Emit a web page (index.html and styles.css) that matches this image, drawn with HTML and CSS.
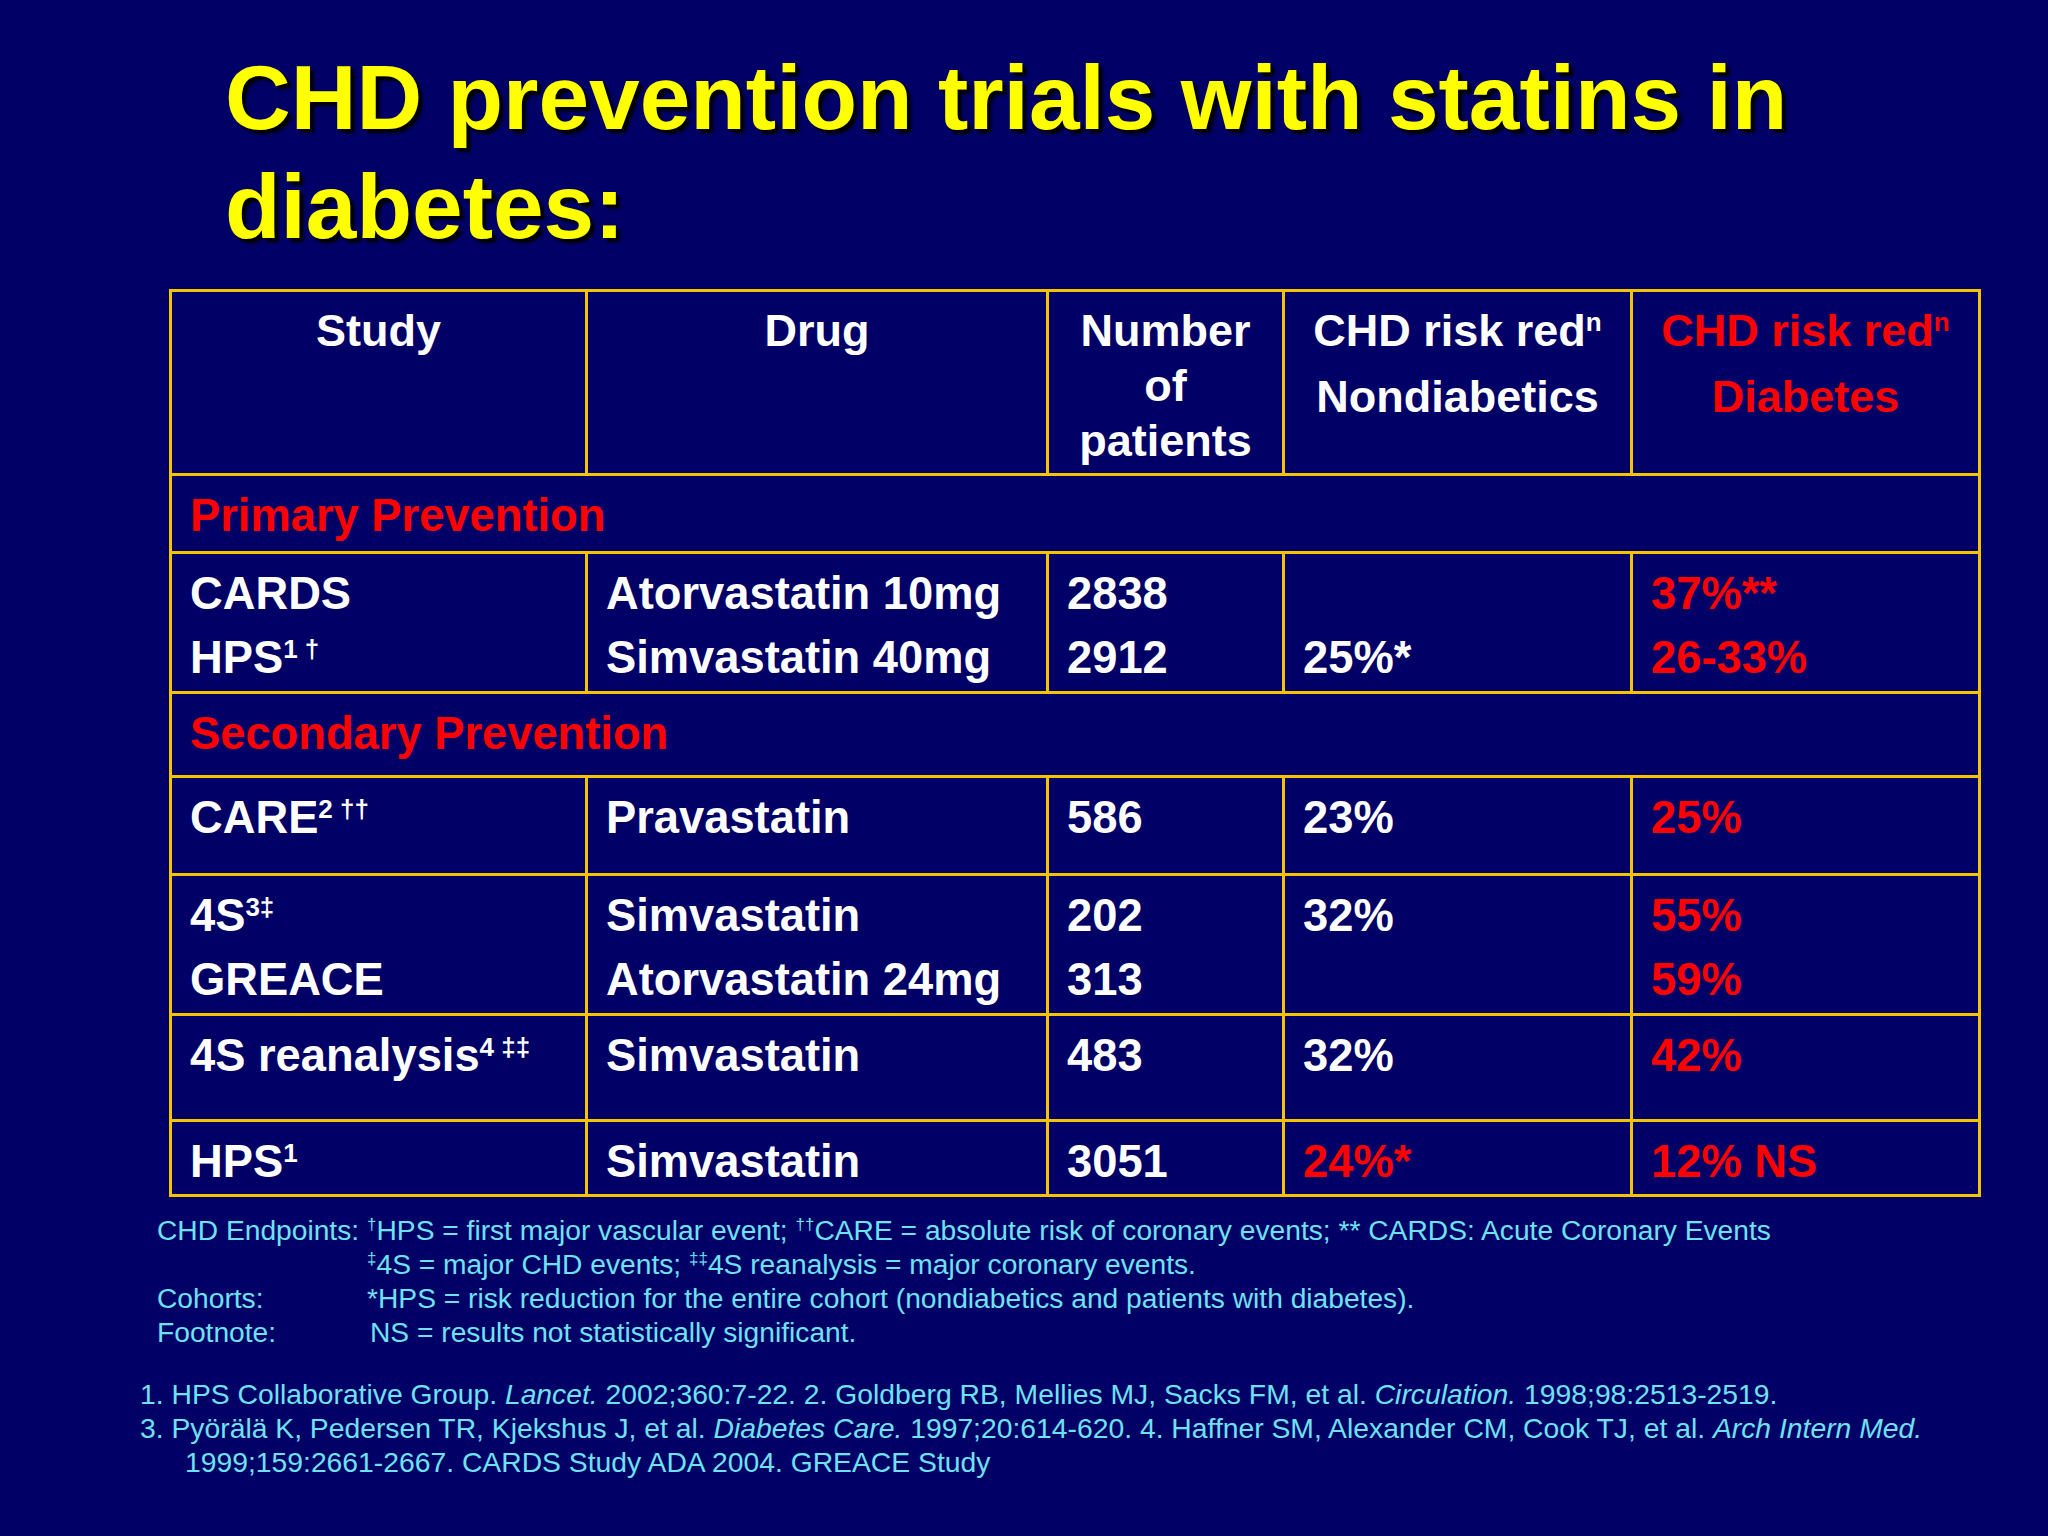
FILE: index.html
```html
<!DOCTYPE html>
<html lang="en">
<head>
<meta charset="utf-8">
<title>CHD prevention trials with statins in diabetes</title>
<link rel="stylesheet" href="styles.css">
</head>
<body>
<div class="slide">
  <h1 class="title">CHD prevention trials with statins in<br>diabetes:</h1>

  <div class="grid">
    <div class="cell head">Study</div>
    <div class="cell head">Drug</div>
    <div class="cell head">Number<br>of<br>patients</div>
    <div class="cell head"><div>CHD risk red<span class="sup">n</span></div><div class="second">Nondiabetics</div></div>
    <div class="cell head red"><div>CHD risk red<span class="sup">n</span></div><div class="second">Diabetes</div></div>

    <div class="cell section red">Primary Prevention</div>

    <div class="cell"><div>CARDS</div><div>HPS<span class="sup">1 †</span></div></div>
    <div class="cell"><div>Atorvastatin 10mg</div><div>Simvastatin 40mg</div></div>
    <div class="cell"><div>2838</div><div>2912</div></div>
    <div class="cell"><div>&nbsp;</div><div>25%*</div></div>
    <div class="cell red"><div>37%**</div><div>26-33%</div></div>

    <div class="cell section red">Secondary Prevention</div>

    <div class="cell">CARE<span class="sup">2 ††</span></div>
    <div class="cell">Pravastatin</div>
    <div class="cell">586</div>
    <div class="cell">23%</div>
    <div class="cell red">25%</div>

    <div class="cell"><div>4S<span class="sup">3‡</span></div><div>GREACE</div></div>
    <div class="cell"><div>Simvastatin</div><div>Atorvastatin 24mg</div></div>
    <div class="cell"><div>202</div><div>313</div></div>
    <div class="cell">32%</div>
    <div class="cell red"><div>55%</div><div>59%</div></div>

    <div class="cell">4S reanalysis<span class="sup">4 ‡‡</span></div>
    <div class="cell">Simvastatin</div>
    <div class="cell">483</div>
    <div class="cell">32%</div>
    <div class="cell red">42%</div>

    <div class="cell">HPS<span class="sup">1</span></div>
    <div class="cell">Simvastatin</div>
    <div class="cell">3051</div>
    <div class="cell red">24%*</div>
    <div class="cell red">12% NS</div>
  </div>

  <div class="notes">
    <div class="label">CHD Endpoints:</div>
    <div class="text"><span class="fsup">†</span>HPS = first major vascular event; <span class="fsup">††</span>CARE = absolute risk of coronary events; ** CARDS: Acute Coronary Events</div>
    <div class="label"></div>
    <div class="text"><span class="fsup">‡</span>4S = major CHD events; <span class="fsup">‡‡</span>4S reanalysis = major coronary events.</div>
    <div class="label">Cohorts:</div>
    <div class="text">*HPS = risk reduction for the entire cohort (nondiabetics and patients with diabetes).</div>
    <div class="label">Footnote:</div>
    <div class="text ns">NS = results not statistically significant.</div>
  </div>

  <div class="refs">
    <div class="ref">1. HPS Collaborative Group. <i>Lancet.</i> 2002;360:7-22. 2. Goldberg RB, Mellies MJ, Sacks FM, et al. <i>Circulation.</i> 1998;98:2513-2519.</div>
    <div class="ref">3. Pyörälä K, Pedersen TR, Kjekshus J, et al. <i>Diabetes Care.</i> 1997;20:614-620. 4. Haffner SM, Alexander CM, Cook TJ, et al. <i>Arch Intern Med.</i></div>
    <div class="ref cont">1999;159:2661-2667. CARDS Study ADA 2004. GREACE Study</div>
  </div>
</div>
</body>
</html>
```

FILE: styles.css
```css
html, body {
  margin: 0;
  padding: 0;
  background: #000066;
}

.slide {
  width: 2048px;
  height: 1536px;
  background: #000066;
  font-family: "Liberation Sans", Arial, sans-serif;
  overflow: hidden;
}

.title {
  margin: 0;
  padding: 43px 0 0 225px;
  font-size: 91px;
  line-height: 109px;
  font-weight: bold;
  color: #ffff00;
  text-shadow: 4px 4px 3px #000000;
}

.grid {
  margin: 28px 0 0 169px;
  width: 1812px;
  box-sizing: border-box;
  display: grid;
  grid-template-columns: 413px 458px 233px 345px 345px;
  grid-template-rows: 181px 75px 137px 81px 95px 137px 103px 72px;
  gap: 3px;
  padding: 3px;
  background: #f5c400;
}

.cell {
  background: #000066;
  color: #ffffff;
  font-size: 45.3px;
  font-weight: bold;
  line-height: 64px;
  padding: 8px 0 0 18px;
  white-space: nowrap;
}

.cell.head {
  text-align: center;
  padding: 11px 0 0 0;
  line-height: 55px;
  font-size: 45px;
}

.cell.head .second {
  margin-top: 11px;
}

.cell.section {
  grid-column: 1 / -1;
}

.red {
  color: #ff0000;
}

.cell.red {
  color: #ff0000;
}

.sup {
  font-size: 26px;
  vertical-align: 15px;
  line-height: 0;
}

.notes {
  margin: 16px 0 0 157px;
  display: grid;
  grid-template-columns: 210px auto;
  font-size: 28.2px;
  line-height: 34px;
  color: #6ee2f2;
  white-space: nowrap;
}

.notes .ns {
  padding-left: 3px;
}

.fsup {
  font-size: 17px;
  vertical-align: 10px;
  line-height: 0;
}

.refs {
  margin: 28px 0 0 140px;
  font-size: 28.3px;
  line-height: 34px;
  color: #6ee2f2;
  white-space: nowrap;
}

.refs .cont {
  padding-left: 45px;
}
```
